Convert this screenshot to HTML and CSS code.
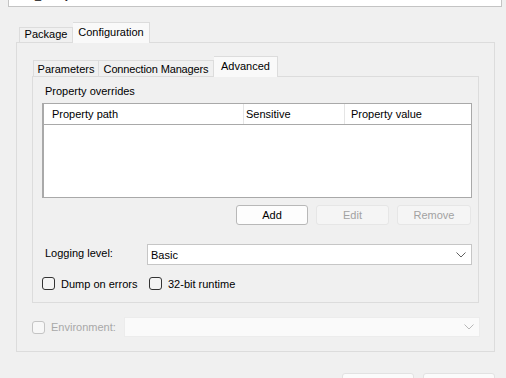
FILE: index.html
```html
<!DOCTYPE html>
<html>
<head>
<meta charset="utf-8">
<link rel="stylesheet" href="styles.css">
</head>
<body>
<div class="top"><div class="namebox">Solo_Policy</div></div>

<div class="tabs outer-tabs">
  <div class="tab">Package</div>
  <div class="tab sel">Configuration</div>
</div>
<div class="panel outer-panel">
  <div class="tabs inner-tabs">
    <div class="tab">Parameters</div>
    <div class="tab">Connection Managers</div>
    <div class="tab sel">Advanced</div>
  </div>
  <div class="panel inner-panel">
    <div class="group-title">Property overrides</div>
    <div class="list">
      <div class="list-head">
        <div class="col c1">Property path</div>
        <div class="col c2">Sensitive</div>
        <div class="col c3">Property value</div>
      </div>
    </div>
    <div class="btnrow">
      <div class="btn add">Add</div>
      <div class="btn dis edit">Edit</div>
      <div class="btn dis remove">Remove</div>
    </div>
    <div class="logrow">
      <div class="loglabel">Logging level:</div>
      <div class="combo">
        <span>Basic</span>
        <svg class="chev" width="10" height="6" viewBox="0 0 10 6"><path d="M0.5 0.5 L5 5 L9.5 0.5" fill="none" stroke="#606060" stroke-width="1"/></svg>
      </div>
    </div>
    <div class="checkrow">
      <div class="check first"><span class="box"></span><span>Dump on errors</span></div>
      <div class="check"><span class="box"></span><span>32-bit runtime</span></div>
    </div>
  </div>
  <div class="envrow">
    <div class="check dis"><span class="box"></span><span>Environment:</span></div>
    <div class="combo dis">
      <span></span>
      <svg class="chev" width="10" height="6" viewBox="0 0 10 6"><path d="M0.5 0.5 L5 5 L9.5 0.5" fill="none" stroke="#b8b8b8" stroke-width="1"/></svg>
    </div>
  </div>
</div>
<div class="bottom">
  <div class="bbtn"></div>
  <div class="bbtn"></div>
</div>
</body>
</html>
```

FILE: styles.css
```css
html, body {
  margin: 0;
  padding: 0;
  background: #f0f0f0;
  font-family: "Liberation Sans", Arial, sans-serif;
  font-size: 11px;
  color: #000;
  width: 506px;
  height: 378px;
  overflow: hidden;
}

.top {
  height: 7px;
  overflow: hidden;
  display: flex;
  align-items: flex-end;
  padding-left: 8px;
}
.namebox {
  width: 494px;
  height: 16px;
  flex: none;
  background: #fff;
  border: 1px solid #c4c4c4;
  border-top: none;
  line-height: 9px;
  padding-left: 4px;
  box-sizing: border-box;
}

.tabs {
  display: flex;
  align-items: flex-end;
}
.tab {
  position: relative;
  box-sizing: border-box;
  border: 1px solid #dcdcdc;
  border-bottom: none;
  background: #f0f0f0;
  white-space: nowrap;
  text-align: center;
}
.tab.sel {
  background: #f9f9f9;
  z-index: 1;
  margin-bottom: -1px;
}

.outer-tabs {
  margin-top: 15px;
  height: 20px;
  padding-left: 19px;
}
.outer-tabs .tab {
  height: 15px;
  line-height: 12px;
  width: 54px;
}
.outer-tabs .tab.sel {
  height: 21px;
  width: 77px;
  line-height: 19px;
  border-left: none;
}

.panel {
  box-sizing: border-box;
  border: 1px solid #dcdcdc;
}
.outer-panel {
  margin-left: 16px;
  width: 479px;
  height: 310px;
  padding-left: 15px;
  padding-top: 13px;
}

.inner-tabs {
  height: 20px;
  padding-left: 1px;
}
.inner-tabs .tab {
  height: 16px;
  line-height: 16px;
}
.inner-tabs .tab:nth-child(1) { width: 66px; }
.inner-tabs .tab:nth-child(2) { width: 115px; border-left: none; letter-spacing: -0.15px; }
.inner-tabs .tab.sel {
  width: 64px;
  height: 21px;
  line-height: 19px;
  border-left: none;
}

.inner-panel {
  width: 447px;
  height: 227px;
  padding: 7px 6px 0 9px;
}

.group-title {
  height: 19px;
  line-height: 15px;
  padding-left: 3px;
}

.list {
  box-sizing: border-box;
  width: 430px;
  height: 95px;
  background: #fff;
  border: 1px solid #a9a9a9;
  border-left: 2px solid #a9a9a9;
}
.list-head {
  display: flex;
  height: 21px;
  border-bottom: 1px solid #a9a9a9;
  box-sizing: border-box;
}
.col {
  line-height: 20px;
  padding-left: 8px;
  box-sizing: border-box;
  border-right: 1px solid #e5e5e5;
  white-space: nowrap;
}
.c1 { width: 200px; }
.c2 { width: 101px; padding-left: 2px; }
.c3 { flex: 1; border-right: none; padding-left: 6px; }

.btnrow {
  display: flex;
  gap: 8px;
  margin-top: 7px;
  padding-left: 194px;
}
.btn {
  box-sizing: border-box;
  height: 20px;
  line-height: 18px;
  text-align: center;
  background: #fdfdfd;
  border: 1px solid #b8b8b8;
  border-radius: 3px;
}
.add { width: 72px; }
.edit { width: 73px; }
.remove { width: 74px; }
.btn.dis {
  background: #f5f5f5;
  border-color: #e6e6e6;
  color: #a2a2a2;
}

.logrow {
  display: flex;
  align-items: center;
  margin-top: 19px;
  height: 21px;
}
.loglabel {
  width: 104px;
  padding-left: 3px;
  margin-top: -4px;
}
.combo {
  box-sizing: border-box;
  flex: none;
  width: 325px;
  height: 21px;
  background: #fff;
  border: 1px solid #c6c6c6;
  display: flex;
  align-items: center;
  justify-content: space-between;
  padding: 0 5px 0 3px;
}
.chev { display: block; }

.checkrow {
  display: flex;
  margin-top: 12px;
}
.check {
  display: flex;
  align-items: center;
  gap: 6px;
  white-space: nowrap;
}
.check.first { width: 107px; }
.box {
  box-sizing: border-box;
  width: 13px;
  height: 13px;
  border: 1px solid #333;
  border-radius: 3px;
  background: #f4f4f4;
  flex: none;
}

.envrow {
  display: flex;
  align-items: center;
  margin-top: 14px;
}
.check.dis { color: #a8a8a8; width: 92px; }
.check.dis .box { border-color: #c4c4c4; background: #f7f7f7; }
.combo.dis {
  width: 356px;
  height: 20px;
  background: #fafafa;
  border-color: #ececec;
}

.bottom {
  display: flex;
  gap: 9px;
  padding-left: 342px;
  margin-top: 21px;
}
.bbtn {
  box-sizing: border-box;
  width: 72px;
  height: 23px;
  border: 1px solid #e2e2e2;
  border-radius: 3px;
  background: #fbfbfb;
}
```
